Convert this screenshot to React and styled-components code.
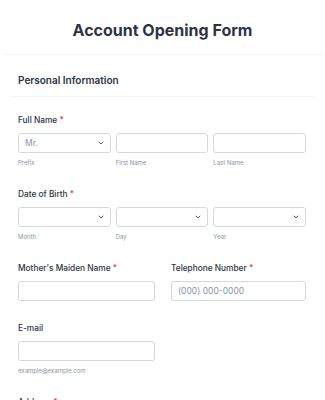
import styled, { createGlobalStyle } from 'styled-components'

const Global = createGlobalStyle`
  body {
    margin: 0;
    background: #ffffff;
    font-family: Inter, "Noto Sans", sans-serif;
    color: #2c3345;
  }
`

function Chevron () {
  return (
    <svg width="6" height="4" viewBox="0 0 6 4" fill="none">
      <path d="M1 1l2 2 2-2" stroke="#57647e" strokeWidth="1" strokeLinecap="round" strokeLinejoin="round" />
    </svg>
  )
}

function SelectBox ({ value }) {
  return (
    <Select>
      <span>{value}</span>
      <Chevron />
    </Select>
  )
}

export default function App () {
  return (
    <Page>
      <Global />
      <Header>
        <h1>Account Opening Form</h1>
      </Header>
      <Section>
        <h2>Personal Information</h2>
      </Section>
      <Form>
        <Field>
          <Label>Full Name <Req>*</Req></Label>
          <Row3>
            <Cell>
              <SelectBox value="Mr." />
              <Sub>Prefix</Sub>
            </Cell>
            <Cell>
              <Input />
              <Sub>First Name</Sub>
            </Cell>
            <Cell>
              <Input />
              <Sub>Last Name</Sub>
            </Cell>
          </Row3>
        </Field>
        <Field>
          <Label>Date of Birth <Req>*</Req></Label>
          <Row3>
            <Cell>
              <SelectBox value="" />
              <Sub>Month</Sub>
            </Cell>
            <Cell>
              <SelectBox value="" />
              <Sub>Day</Sub>
            </Cell>
            <Cell>
              <SelectBox value="" />
              <Sub>Year</Sub>
            </Cell>
          </Row3>
        </Field>
        <Row2>
          <Field>
            <Label>Mother's Maiden Name <Req>*</Req></Label>
            <Input />
          </Field>
          <Field>
            <Label>Telephone Number <Req>*</Req></Label>
            <Input placeholder="(000) 000-0000" />
          </Field>
        </Row2>
        <Row2>
          <Field>
            <Label>E-mail</Label>
            <Input />
            <Sub>example@example.com</Sub>
          </Field>
        </Row2>
        <Field>
          <Label>Address <Req>*</Req></Label>
        </Field>
      </Form>
    </Page>
  )
}

const Page = styled.div`
  width: 325px;
  height: 400px;
  overflow: hidden;
  background: #ffffff;
`
const Header = styled.div`
  margin: 0 3px;
  padding: 19px 0 13px;
  border-bottom: 1px solid #f3f3fe;
  text-align: center;
  h1 {
    margin: 0;
    font-size: 16px;
    font-weight: 700;
    line-height: 22px;
    color: #2c3345;
  }
`
const Section = styled.div`
  margin: 0 11px;
  padding: 18px 7px 9px;
  border-bottom: 1px solid #f3f3fe;
  h2 {
    margin: 0;
    font-size: 10px;
    font-weight: 600;
    line-height: 14px;
    color: #2c3345;
  }
`
const Form = styled.div`
  padding: 17px 19px 0 18px;
  display: flex;
  flex-direction: column;
  gap: 21px;
`
const Field = styled.div`
  display: flex;
  flex-direction: column;
  min-width: 0;
`
const Label = styled.div`
  font-size: 8.3px;
  font-weight: 500;
  line-height: 12px;
  margin-bottom: 7px;
  color: #2c3345;
`
const Req = styled.span`
  color: #f23a3c;
`
const Row3 = styled.div`
  display: grid;
  grid-template-columns: 1fr 1fr 1fr;
  gap: 5px;
`
const Row2 = styled.div`
  display: grid;
  grid-template-columns: 137px 1fr;
  gap: 16px;
`
const Cell = styled.div`
  display: flex;
  flex-direction: column;
`
const boxStyle = `
  box-sizing: border-box;
  width: 100%;
  height: 20px;
  border: 1px solid #d3d8e3;
  border-radius: 3px;
  background: #ffffff;
`
const Input = styled.input`
  ${boxStyle}
  padding: 0 6px;
  font-family: Inter, "Noto Sans", sans-serif;
  font-size: 8.5px;
  color: #2c3345;
  outline: none;
  &::placeholder {
    color: #8c95a8;
  }
`
const Select = styled.div`
  ${boxStyle}
  display: flex;
  align-items: center;
  justify-content: space-between;
  padding: 0 6px;
  span {
    font-size: 8.5px;
    color: #8c95a8;
  }
`
const Sub = styled.div`
  margin-top: 6px;
  font-size: 6px;
  line-height: 8px;
  color: #8c95a8;
`
